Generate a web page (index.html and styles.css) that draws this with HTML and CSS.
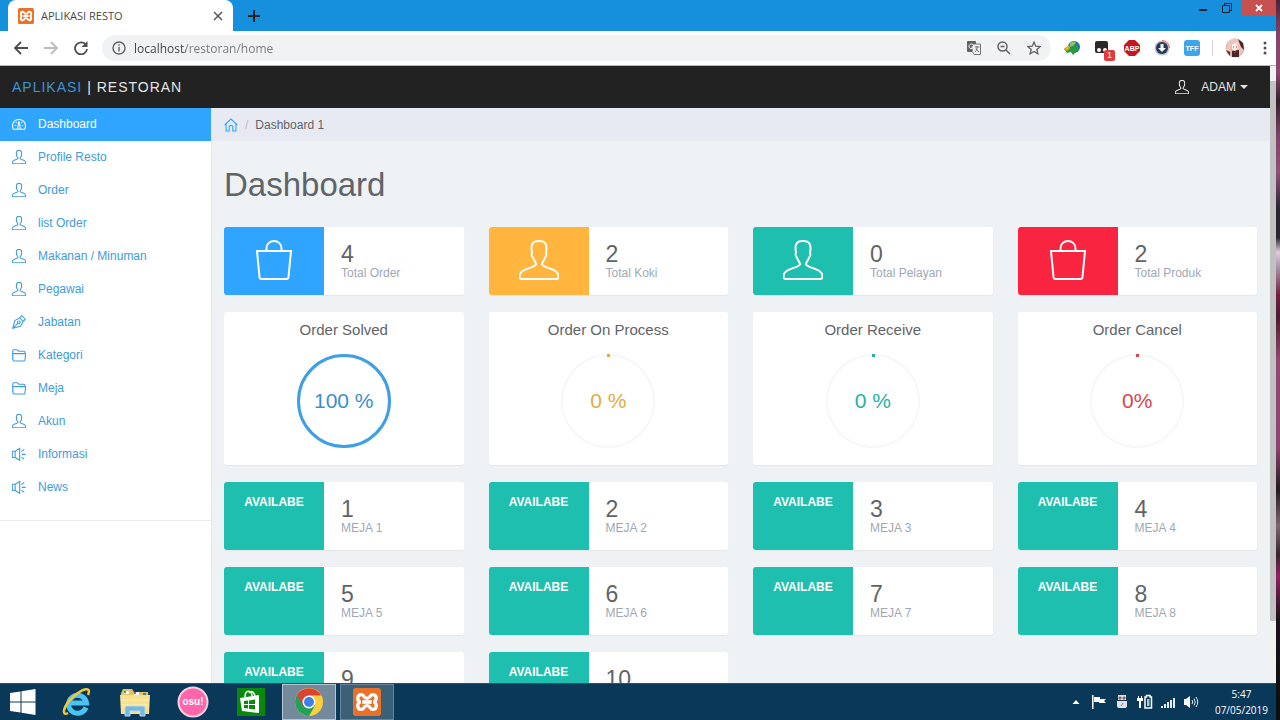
FILE: index.html
```
<!DOCTYPE html>
<html lang="id">
<head>
    <meta charset="UTF-8">
    <meta name="viewport" content="width=device-width, initial-scale=1.0">
    <title>APLIKASI RESTO</title>
    <link rel="stylesheet" href="styles.css">
</head>
<body>
    <!-- icon set -->
    <svg class="sprite" aria-hidden="true">
        <symbol id="i-user" viewBox="0 0 40 40">
            <path d="M17 24.500C17 22 14.800 20.500 14 17.500C12.600 16.500 12.300 14 13 12.500C11.500 5 13 1 20 1S28.500 5 27 12.500C27.700 14 27.400 16.500 26 17.500C25.200 20.500 23 22 23 24.500C26 29 39.500 28 39.500 36.500Q39.500 39 37 39H3Q.5 39 .5 36.500C.5 28 14 29 17 24.500Z"/>
        </symbol>
        <symbol id="i-bag" viewBox="0 0 40 40">
            <path d="M3 11H37L34.500 37Q34.300 39 32.500 39H7.500Q5.700 39 5.500 37ZM12.500 11V8.500C12.500 -1.500 27.500 -1.500 27.500 8.500V11"/>
        </symbol>
        <symbol id="i-gauge" viewBox="0 0 40 40">
            <path d="M4 35C-2 23 4 7 20 7S42 23 36 35ZM16 35L19 14H21L24 35M8 24H12M28 24H32M11 14L13 17M29 14L27 17"/>
        </symbol>
        <symbol id="i-pen" viewBox="0 0 40 40">
            <path d="M2 38L8 16L22 8L32 18L24 32ZM22 8L28 2L38 12L32 18M2 38L17 23M20 17A4 4 0 1 1 19 17"/>
        </symbol>
        <symbol id="i-folder" viewBox="0 0 40 40">
            <path d="M2 33V9Q2 5 5 5H15L19 9H34Q37 9 37 12V16M2 16H39L37 34Q37 37 34 37H6Q3 37 3 34Z"/>
        </symbol>
        <symbol id="i-speaker" viewBox="0 0 40 40">
            <path d="M1 12H9V30H1ZM9 12L22 4V38L9 30M28 21H39M27 13L35 7M27 29L35 35"/>
        </symbol>
        <symbol id="i-home" viewBox="0 0 40 40">
            <path d="M2 20L20 3L38 20M6 17V37H15V25Q15 21 20 21T25 25V37H34V17"/>
        </symbol>
        <symbol id="i-xampp" viewBox="0 0 30 30">
            <rect width="30" height="30" rx="3" fill="#e8722a"/>
            <path d="M9 7C4 7 4 14 8 15C4 16 4 23 9 23C12 23 11 19 15 19S18 23 21 23C26 23 26 16 22 15C26 14 26 7 21 7C18 7 19 11 15 11S12 7 9 7Z" fill="none" stroke="#fff" stroke-width="3.500"/>
            <path d="M10 15H20" stroke="#fff" stroke-width="4"/>
        </symbol>
    </svg>

    <div class="desktop">
        <div class="screen">

            <!-- browser -->
            <div class="tabbar">
                <div class="tab">
                    <svg class="tab-icon"><use href="#i-xampp"/></svg>
                    <span class="tab-title">APLIKASI RESTO</span>
                    <button class="plain" aria-label="Close tab"><svg width="10" height="10" viewBox="0 0 10 10"><path d="M1 1L9 9M9 1L1 9" stroke="#555" stroke-width="1.500"/></svg></button>
                </div>
                <button class="plain new-tab" aria-label="New tab"><svg width="12" height="12" viewBox="0 0 12 12"><path d="M6 0V12M0 6H12" stroke="#222" stroke-width="2"/></svg></button>
                <div class="window-controls">
                    <button class="plain" aria-label="Minimize"><svg width="10" height="16" viewBox="0 0 10 16"><path d="M1 10H9" stroke="#123" stroke-width="2"/></svg></button>
                    <button class="plain" aria-label="Restore"><svg width="10" height="16" viewBox="0 0 10 16" fill="none" stroke="#123"><path d="M.5 5.500H7.500V12.500H.5ZM2.500 5V3.500H9.500V10.500H8"/></svg></button>
                    <button class="plain window-close" aria-label="Close"><svg width="8" height="8" viewBox="0 0 8 8"><path d="M1 1L7 7M7 1L1 7" stroke="#fff" stroke-width="1.800"/></svg></button>
                </div>
            </div>

            <div class="toolbar">
                <button class="plain" aria-label="Back"><svg width="14" height="14" viewBox="0 0 14 14" fill="none" stroke="#4c4f52" stroke-width="1.800"><path d="M14 7H1.500M7 1L1 7L7 13"/></svg></button>
                <button class="plain" aria-label="Forward"><svg width="14" height="14" viewBox="0 0 14 14" fill="none" stroke="#b9bbbd" stroke-width="1.800"><path d="M0 7H12.500M7 1L13 7L7 13"/></svg></button>
                <button class="plain" aria-label="Reload"><svg width="14" height="14" viewBox="0 0 14 14" fill="none" stroke="#4c4f52" stroke-width="1.800"><path d="M12 4A6 6 0 1 0 13 8"/><path d="M13.500 0V6H7.500Z" fill="#4c4f52" stroke="none"/></svg></button>
                <div class="address">
                    <svg width="14" height="14" viewBox="0 0 14 14" fill="none" stroke="#5f6368" stroke-width="1.400"><circle cx="7" cy="7" r="6"/><path d="M7 6V10.500M7 3.300V4.800"/></svg>
                    <input class="url" type="text" value="localhost/restoran/home" aria-label="Address">
                    <button class="plain" aria-label="Translate"><svg width="14" height="14" viewBox="0 0 14 14"><rect width="9" height="11" rx="1" fill="#5f6368"/><path d="M6 3H13.500V13.500H7L5.500 11" fill="#eee" stroke="#777"/><path d="M6.300 4.200A2.300 2.300 0 1 0 6.500 6H4.500" fill="none" stroke="#fff"/><path d="M8 6H12.500M10 5V6C10 9 9 10 8 11M9 7.500L12 11" fill="none" stroke="#777"/></svg></button>
                    <button class="plain" aria-label="Zoom"><svg width="14" height="14" viewBox="0 0 14 14" fill="none" stroke="#5f6368" stroke-width="1.500"><circle cx="5.500" cy="5.500" r="4.500"/><path d="M9 9L13 13M3.500 5.500H7.500"/></svg></button>
                    <button class="plain" aria-label="Bookmark"><svg width="14" height="14" viewBox="0 0 14 14" fill="none" stroke="#5f6368" stroke-width="1.300"><path d="M7 1L8.700 5.200L13.200 5.500L9.800 8.400L10.900 12.800L7 10.400L3.100 12.800L4.200 8.400L.8 5.500L5.300 5.200Z"/></svg></button>
                </div>
                <div class="extensions">
                    <button class="plain" aria-label="Download manager"><svg width="16" height="16" viewBox="0 0 16 16"><circle cx="10" cy="7" r="6" fill="#236fb1"/><path d="M6 3Q10 0 12 3L9 6L6 7Z" fill="#8fc95a"/><path d="M0 9L5 5L6 8L13 4L15 9L9 15L7 12L3 13Z" fill="#2b9a3b"/><path d="M0 9L5 5L6 8L3 11Z" fill="#e5ae28"/></svg></button>
                    <button class="plain ext-badged" aria-label="Tampermonkey"><svg width="16" height="16" viewBox="0 0 16 16"><rect x="1" y="1" width="13" height="12" rx="2" fill="#2b2b2b"/><circle cx="5" cy="10" r="2" fill="#fff"/><circle cx="11" cy="10" r="2" fill="#fff"/></svg><span class="badge">1</span></button>
                    <button class="plain" aria-label="Adblock Plus"><svg width="16" height="16" viewBox="0 0 16 16"><path d="M5 0H11L16 5V11L11 16H5L0 11V5Z" fill="#c3181f"/><text x="8" y="11" class="ext-text">ABP</text></svg></button>
                    <button class="plain" aria-label="Downloader"><svg width="16" height="16" viewBox="0 0 16 16"><circle cx="8" cy="8" r="7.500" fill="#b9c4cc"/><path d="M8 .5A7.500 7.500 0 0 1 15.500 8" stroke="#e56a5a" fill="none"/><circle cx="8" cy="8" r="6" fill="#24385c"/><path d="M6.500 4H9.500V8H12L8 12L4 8H6.500Z" fill="#fff"/></svg></button>
                    <button class="plain" aria-label="TFF"><svg width="16" height="16" viewBox="0 0 16 16"><rect width="16" height="16" rx="3" fill="#3fa5ea"/><text x="8" y="11" class="ext-text">TFF</text></svg></button>
                    <span class="divider"></span>
                    <button class="plain" aria-label="Profile"><svg width="20" height="20" viewBox="0 0 20 20"><circle cx="10" cy="10" r="9.500" fill="#d9b7ab"/><path d="M3 4Q10 -3 17 4L18 12L14 18L13 7L7 5L5 14L1 12Z" fill="#efc6bd"/><path d="M13 1L18 5L19 12L16 9ZM1 12L5 14L5 18ZM7 13L14 12L14 19H7Z" fill="#4a2527"/><path d="M7 6L12 5L13 10L10 13L7 11Z" fill="#fff0e8"/><path d="M8 9H9M11 9H12M9 15L11 14" stroke="#b23a44"/></svg></button>
                    <button class="plain menu-dots" aria-label="Menu"><svg width="4" height="14" viewBox="0 0 4 14" fill="#4c4f52"><circle cx="2" cy="2" r="1.500"/><circle cx="2" cy="7" r="1.500"/><circle cx="2" cy="12" r="1.500"/></svg></button>
                </div>
            </div>

            <!-- page -->
            <div class="viewport">
                <div class="page">
                    <header class="navbar">
                        <a class="brand" href="#"><span>APLIKASI</span> | RESTORAN</a>
                        <button class="plain user-menu"><svg class="icon"><use href="#i-user"/></svg>ADAM<span class="caret"></span></button>
                    </header>

                    <div class="layout">
                        <nav class="sidebar">
                            <ul class="menu">
                                <li><a class="active" href="#"><svg class="icon"><use href="#i-gauge"/></svg>Dashboard</a></li>
                                <li><a href="#"><svg class="icon"><use href="#i-user"/></svg>Profile Resto</a></li>
                                <li><a href="#"><svg class="icon"><use href="#i-user"/></svg>Order</a></li>
                                <li><a href="#"><svg class="icon"><use href="#i-user"/></svg>list Order</a></li>
                                <li><a href="#"><svg class="icon"><use href="#i-user"/></svg>Makanan / Minuman</a></li>
                                <li><a href="#"><svg class="icon"><use href="#i-user"/></svg>Pegawai</a></li>
                                <li><a href="#"><svg class="icon"><use href="#i-pen"/></svg>Jabatan</a></li>
                                <li><a href="#"><svg class="icon"><use href="#i-folder"/></svg>Kategori</a></li>
                                <li><a href="#"><svg class="icon"><use href="#i-folder"/></svg>Meja</a></li>
                                <li><a href="#"><svg class="icon"><use href="#i-user"/></svg>Akun</a></li>
                                <li><a href="#"><svg class="icon"><use href="#i-speaker"/></svg>Informasi</a></li>
                                <li><a href="#"><svg class="icon"><use href="#i-speaker"/></svg>News</a></li>
                            </ul>
                        </nav>

                        <main class="main">
                            <div class="breadcrumb">
                                <a href="#" aria-label="Home"><svg class="icon"><use href="#i-home"/></svg></a>
                                <span class="slash">/</span>
                                <span>Dashboard 1</span>
                            </div>

                            <div class="content">
                                <h1>Dashboard</h1>

                                <div class="cards">
                                    <div class="card widget">
                                        <div class="widget-left blue"><svg class="icon-lg"><use href="#i-bag"/></svg></div>
                                        <div class="widget-right"><div class="large">4</div><div class="muted">Total Order</div></div>
                                    </div>
                                    <div class="card widget">
                                        <div class="widget-left orange"><svg class="icon-lg"><use href="#i-user"/></svg></div>
                                        <div class="widget-right"><div class="large">2</div><div class="muted">Total Koki</div></div>
                                    </div>
                                    <div class="card widget">
                                        <div class="widget-left teal"><svg class="icon-lg"><use href="#i-user"/></svg></div>
                                        <div class="widget-right"><div class="large">0</div><div class="muted">Total Pelayan</div></div>
                                    </div>
                                    <div class="card widget">
                                        <div class="widget-left red"><svg class="icon-lg"><use href="#i-bag"/></svg></div>
                                        <div class="widget-right"><div class="large">2</div><div class="muted">Total Produk</div></div>
                                    </div>

                                    <div class="card chart">
                                        <h4>Order Solved</h4>
                                        <div class="ring ring-full"><span>100 %</span></div>
                                    </div>
                                    <div class="card chart">
                                        <h4>Order On Process</h4>
                                        <div class="ring ring-orange"><span>0 %</span></div>
                                    </div>
                                    <div class="card chart">
                                        <h4>Order Receive</h4>
                                        <div class="ring ring-teal"><span>0 %</span></div>
                                    </div>
                                    <div class="card chart">
                                        <h4>Order Cancel</h4>
                                        <div class="ring ring-red"><span>0%</span></div>
                                    </div>

                                    <div class="card widget">
                                        <div class="widget-left teal status">AVAILABE</div>
                                        <div class="widget-right"><div class="large">1</div><div class="muted">MEJA 1</div></div>
                                    </div>
                                    <div class="card widget">
                                        <div class="widget-left teal status">AVAILABE</div>
                                        <div class="widget-right"><div class="large">2</div><div class="muted">MEJA 2</div></div>
                                    </div>
                                    <div class="card widget">
                                        <div class="widget-left teal status">AVAILABE</div>
                                        <div class="widget-right"><div class="large">3</div><div class="muted">MEJA 3</div></div>
                                    </div>
                                    <div class="card widget">
                                        <div class="widget-left teal status">AVAILABE</div>
                                        <div class="widget-right"><div class="large">4</div><div class="muted">MEJA 4</div></div>
                                    </div>
                                    <div class="card widget">
                                        <div class="widget-left teal status">AVAILABE</div>
                                        <div class="widget-right"><div class="large">5</div><div class="muted">MEJA 5</div></div>
                                    </div>
                                    <div class="card widget">
                                        <div class="widget-left teal status">AVAILABE</div>
                                        <div class="widget-right"><div class="large">6</div><div class="muted">MEJA 6</div></div>
                                    </div>
                                    <div class="card widget">
                                        <div class="widget-left teal status">AVAILABE</div>
                                        <div class="widget-right"><div class="large">7</div><div class="muted">MEJA 7</div></div>
                                    </div>
                                    <div class="card widget">
                                        <div class="widget-left teal status">AVAILABE</div>
                                        <div class="widget-right"><div class="large">8</div><div class="muted">MEJA 8</div></div>
                                    </div>
                                    <div class="card widget">
                                        <div class="widget-left teal status">AVAILABE</div>
                                        <div class="widget-right"><div class="large">9</div></div>
                                    </div>
                                    <div class="card widget">
                                        <div class="widget-left teal status">AVAILABE</div>
                                        <div class="widget-right"><div class="large">10</div></div>
                                    </div>
                                </div>
                            </div>
                        </main>
                    </div>
                </div>
                <div class="scrollbar"><div class="thumb"></div></div>
            </div>

            <!-- taskbar -->
            <footer class="taskbar">
                <button class="plain start" aria-label="Start"><svg width="26" height="26" viewBox="0 0 26 26" fill="#fff"><path d="M0 4L10.500 2.500V12.500H0ZM11.500 2.300L25.500 0V12.500H11.500ZM0 13.500H10.500V23.500L0 22ZM11.500 13.500H25.500V26L11.500 23.700Z"/></svg></button>
                <div class="apps">
                    <button class="plain app" aria-label="Internet Explorer"><svg width="30" height="30" viewBox="0 0 30 30" fill="none"><path d="M24 20.500A9 9 0 1 1 24.500 16H9" stroke="#4cc4f3" stroke-width="5"/><path d="M6 26C-1 30 1 19 11 10S30 -1 26 8" stroke="#f3c832" stroke-width="2.500"/></svg></button>
                    <button class="plain app" aria-label="File Explorer"><svg width="30" height="30" viewBox="0 0 30 30"><path d="M1 6L3 2H12L14 5H28L29 26H1Z" fill="#e2c264"/><path d="M4 4H9V7H4ZM14 5H19V8H14Z" fill="#fff"/><path d="M4 4H6V6H4Z" fill="#3a9d4c"/><path d="M14 5H16V7H14Z" fill="#d2543f"/><path d="M23 6H26V8H23Z" fill="#3b83c9"/><path d="M0 8H30L29 27H1Z" fill="#f7e08f"/><path d="M1 13H29M1 18H29" stroke="#fff0b4"/><path d="M5 29V21Q5 19 7 19H23Q25 19 25 21V29H20V24H10V29Z" fill="#79b7df" stroke="#b7dcf2"/></svg></button>
                    <button class="plain app" aria-label="osu!"><svg width="32" height="32" viewBox="0 0 32 32"><circle cx="16" cy="16" r="14.500" fill="#ff66aa" stroke="#f3d2e2" stroke-width="2"/><text x="16" y="19" class="osu">osu!</text></svg></button>
                    <button class="plain app" aria-label="Store"><svg width="28" height="28" viewBox="0 0 28 28"><rect width="28" height="28" fill="#078a0b"/><path d="M3 10L22 7V25L5 23Z" fill="#fff"/><path d="M8 9C8 1 15 2 15 8M12 5Q16 1 18 8" fill="none" stroke="#fff" stroke-width="1.500"/><path d="M7 13L11 12.500V16H7ZM12 12.400L18 11.500V16H12ZM7 17H11V20.500L7 20ZM12 17H18V21.500L12 20.700Z" fill="#078a0b"/></svg></button>
                    <button class="plain app app-open app-current" aria-label="Chrome"><svg width="28" height="28" viewBox="0 0 28 28"><circle cx="14" cy="14" r="14" fill="#f9cf3b"/><path d="M14 14L1.900 7A14 14 0 0 0 14 28L20 17.500Z" fill="#23a05a"/><path d="M1.900 7A14 14 0 0 1 26.100 7.500H14L8 17.500Z" fill="#dc4335"/><circle cx="14" cy="14" r="6.500" fill="#fff"/><circle cx="14" cy="14" r="5" fill="#3f7fe8"/></svg></button>
                    <button class="plain app app-open" aria-label="XAMPP"><svg width="30" height="28"><use href="#i-xampp"/></svg></button>
                </div>
                <div class="tray">
                    <button class="plain" aria-label="Show hidden icons"><svg width="16" height="16" viewBox="0 0 16 16"><path d="M4.500 10L8 6L11.500 10Z" fill="#fff"/></svg></button>
                    <button class="plain" aria-label="Action Center"><svg width="16" height="16" viewBox="0 0 16 16" fill="#fff"><path d="M1 1H2.500V15H1ZM3 3H9V5H15L13 7L15 9H8V8H3Z"/></svg></button>
                    <button class="plain" aria-label="Safely remove hardware"><svg width="16" height="16" viewBox="0 0 16 16"><path d="M4 1H12V6H4ZM3 7H13V12Q13 14 11 14H5Q3 14 3 12Z" fill="#dfe3e5"/><path d="M5 3H7V5H5ZM9 3H11V5H9ZM7 12L9 9" fill="#345" stroke="#a66"/></svg></button>
                    <button class="plain" aria-label="Battery"><svg width="16" height="16" viewBox="0 0 16 16" fill="#fff"><path d="M1 4V2H2V4H4V2H5V4H6V7H4V14H2V7H0V4Z"/><path d="M8 3H9.500V1.500H13V3H14.500V14H8Z" fill="none" stroke="#fff" stroke-width="1.500"/><path d="M10 5H12.500V12H10Z" opacity=".7"/></svg></button>
                    <button class="plain" aria-label="Network"><svg width="16" height="16" viewBox="0 0 16 16" fill="#e9edf0"><path d="M1 12H3V14H1ZM4 10H6V14H4ZM7 8H9V14H7ZM10 6H12V14H10ZM13 4H15V14H13Z"/></svg></button>
                    <button class="plain" aria-label="Volume"><svg width="16" height="16" viewBox="0 0 16 16"><path d="M1 5H3L7 2V14L3 11H1Z" fill="#fff"/><path d="M9 6Q10.500 8 9 10M11 4.500Q13.500 8 11 11.500M13 3Q16.500 8 13 13" fill="none" stroke="#dfe6ea"/></svg></button>
                </div>
                <div class="clock"><div>5:47</div><div>07/05/2019</div></div>
            </footer>
        </div>
        <div class="wallpaper"></div>
    </div>
</body>
</html>
```
FILE: styles.css
```
* { box-sizing: border-box; }

body {
    margin: 0;
    font-family: "Liberation Sans", Arial, sans-serif;
    font-size: 12px;
    color: #5f6468;
}
a { text-decoration: none; color: inherit; }
svg { display: block; flex: none; }
.sprite { position: absolute; width: 0; height: 0; }

.plain {
    display: flex;
    align-items: center;
    justify-content: center;
    padding: 0;
    border: 0;
    background: none;
    font: inherit;
    color: inherit;
    cursor: pointer;
}

.desktop { display: flex; height: 100vh; overflow: hidden; }
.screen { flex: 1; min-width: 0; display: flex; flex-direction: column; }
.wallpaper {
    width: 4px;
    background: linear-gradient(#4c2438 0, #85456b 5%, #8a4870 10%, #33202c 14%, #7d4668 19%, #8d4f77 24%, #2a2530 29%, #2a2530 33%, #e0cbdc 35%, #a998aa 37%, #6f1f40 41%, #4b1b2d 44%, #8f4870 50%, #8c4570 62%, #251a22 68%, #7d6574 73%, #382530 77%, #8d2360 80%, #1c1218 86%, #0b100e 100%);
}

/* browser */
.tabbar {
    display: flex;
    height: 31px;
    padding-left: 8px;
    background: #168fdd;
}
.tab {
    display: flex;
    align-items: center;
    gap: 7px;
    width: 225px;
    padding: 0 10px;
    background: #fff;
    border-radius: 8px 8px 0 0;
}
.tab-icon { width: 16px; height: 16px; }
.tab-title { flex: 1; font: 11px "Open Sans", sans-serif; color: #45494d; }
.new-tab { width: 42px; }
.window-controls { display: flex; align-items: flex-start; margin-left: auto; gap: 14px; }
.window-close { width: 35px; height: 16px; margin-left: -5px; background: #c75050; }

.toolbar {
    display: flex;
    align-items: center;
    gap: 16px;
    height: 35px;
    padding: 0 9px 0 14px;
    background: #fff;
    border-bottom: 1px solid #b8b8b8;
}
.address {
    flex: 1;
    display: flex;
    align-items: center;
    gap: 16px;
    height: 26px;
    margin-left: -2px;
    padding: 0 10px;
    border-radius: 13px;
    background: #f0f2f3;
}
.url {
    flex: 1;
    min-width: 0;
    margin-left: -8px;
    padding: 0;
    border: 0;
    outline: 0;
    font: 12px "Open Sans", sans-serif;
    color: transparent;
    background: linear-gradient(90deg, #3c4043 52px, #75797d 52px);
    -webkit-background-clip: text;
    background-clip: text;
}
.extensions { display: flex; align-items: center; gap: 14px; margin-left: -3px; }
.ext-badged { position: relative; }
.badge {
    position: absolute;
    right: -5px;
    bottom: -5px;
    width: 11px;
    height: 11px;
    border-radius: 2px;
    background: #e03a3c;
    color: #fff;
    font-size: 9px;
    line-height: 11px;
}
.ext-text { font: bold 7px "Liberation Sans", sans-serif; fill: #fff; text-anchor: middle; }
.divider { width: 1px; height: 16px; margin: 0 -2px; background: #d5d7d9; }
.menu-dots { margin-left: 4px; }

/* page */
.viewport { flex: 1; min-height: 0; display: flex; }
.page { flex: 1; min-width: 0; display: flex; flex-direction: column; overflow: hidden; background: #eef2f5; }
.scrollbar { width: 6px; padding: 15px 0 62px; background: #f1f1f1; }
.thumb { height: 100%; background: #c1c1c1; }

.navbar {
    flex: none;
    display: flex;
    align-items: center;
    justify-content: space-between;
    height: 42px;
    padding: 0 22px 0 12px;
    background: #222;
    color: #e4e4e4;
}
.brand { font-size: 14px; letter-spacing: 1px; }
.brand span { color: #3e93d5; }
.user-menu { gap: 12px; }
.caret {
    margin-left: -8px;
    border: 4px solid transparent;
    border-top-color: #e4e4e4;
    border-bottom: 0;
}

.icon, .icon-lg { fill: none; stroke: currentColor; }
.icon { width: 14px; height: 14px; stroke-width: 3; }
.icon-lg { width: 40px; height: 40px; stroke-width: 2; overflow: visible; }

.layout { flex: 1; min-height: 0; display: flex; }
.sidebar { width: 212px; background: #fff; border-right: 1px solid #e3e8ec; }
.menu {
    margin: 0;
    padding: 0 0 16px;
    list-style: none;
    border-bottom: 1px solid #e9ecef;
}
.menu a {
    display: flex;
    align-items: center;
    gap: 12px;
    height: 33px;
    padding: 0 12px 1px;
    color: #3e9bdc;
}
.menu a.active { background: #30a5ff; color: #fff; }

.main { flex: 1; min-width: 0; }
.breadcrumb {
    display: flex;
    align-items: center;
    gap: 7px;
    height: 33px;
    padding: 0 12px;
    background: #e7eaf2;
}
.breadcrumb a { color: #30a5ff; }
.breadcrumb .slash { color: #b9bdc6; }

.content { padding: 26px 13px 0 12px; }
h1 { margin: 0 0 24px; font-size: 33px; line-height: 36px; font-weight: normal; }

.cards { display: grid; grid-template-columns: repeat(4, 1fr); gap: 17px 25px; }
.card { overflow: hidden; background: #fff; border-radius: 3px; box-shadow: 0 1px 1px #e3e7ea; }

.widget { display: flex; height: 68px; }
.widget-left { display: flex; align-items: center; justify-content: center; width: 100px; padding-bottom: 2px; color: #fff; }
.widget-right { padding: 14px 0 0 17px; }
.blue { background: #30a5ff; }
.orange { background: #ffb53e; }
.teal { background: #1ebfae; }
.red { background: #f9243f; }
.status { align-items: flex-start; padding-top: 12px; font-weight: bold; line-height: 16px; }
.large { font-size: 23px; line-height: 26px; }
.muted { line-height: 12px; color: #9fa8b4; }

.chart { display: flex; flex-direction: column; align-items: center; gap: 14px; padding: 8px 0 17px; }
.chart h4 { margin: 0; font-size: 15px; line-height: 20px; font-weight: normal; }
.ring {
    position: relative;
    display: flex;
    align-items: center;
    justify-content: center;
    width: 94px;
    height: 94px;
    border: 2px solid #f7f7f7;
    border-radius: 50%;
    font-size: 21px;
}
/* start mark of an empty chart */
.ring::before {
    content: "";
    position: absolute;
    top: -2px;
    left: 50%;
    width: 3px;
    height: 3px;
    margin-left: -1px;
    background: currentColor;
}
.ring-full { border: 3px solid #3f9fe5; color: #3a8fd0; }
.ring-full::before { display: none; }
.ring-orange { color: #e5ab3f; }
.ring-teal { color: #27b3a4; }
.ring-red { color: #d9454a; }

/* taskbar */
.taskbar {
    flex: none;
    display: flex;
    height: 37px;
    padding-right: 8px;
    background: #0a3859;
    border-top: 1px solid #27536b;
    color: #fff;
}
.start { width: 46px; }
.apps { display: flex; gap: 4px; margin-left: 4px; }
.app { width: 54px; }
.app-open { background: #3d6079; border: 1px solid #66839a; }
.app-current { background: #75899c; border-color: #b9c5ce; }
.osu { font: bold 10px "Liberation Sans", sans-serif; fill: #fff; text-anchor: middle; }
.tray { display: flex; gap: 7px; margin: 0 16px 0 auto; }
.clock { align-self: center; font: 10px/16px "Open Sans", sans-serif; text-align: center; }
```
